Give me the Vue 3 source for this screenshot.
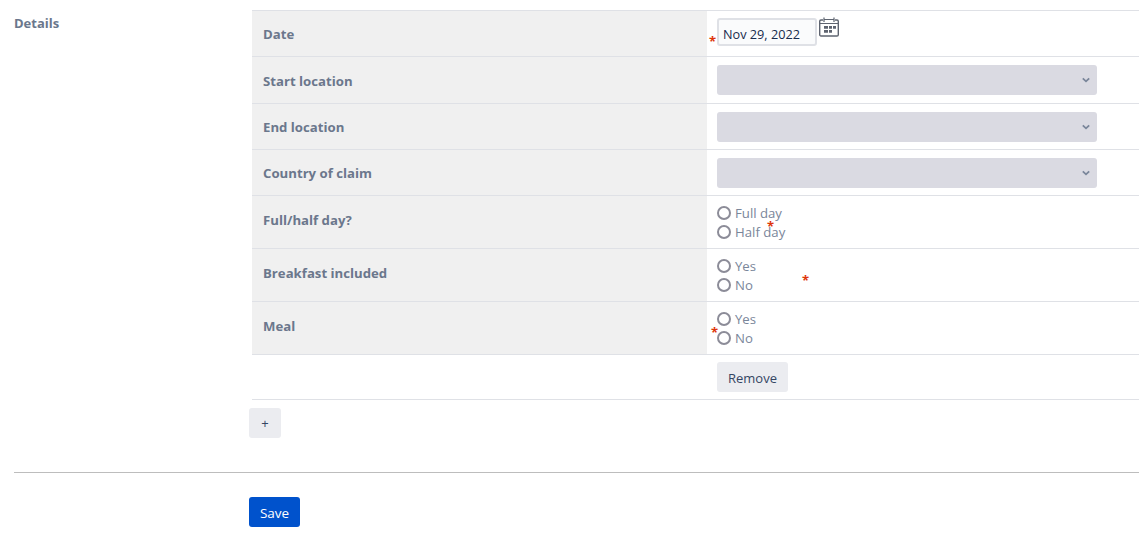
<script setup>
const rows = [
  { label: 'Date', type: 'date', height: 46, star: 'star-date' },
  { label: 'Start location', type: 'select', height: 47, labelClass: 'label-low' },
  { label: 'End location', type: 'select', height: 46 },
  { label: 'Country of claim', type: 'select', height: 46 },
  { label: 'Full/half day?', type: 'radio', height: 53, options: ['Full day', 'Half day'], star: 'star-day', labelClass: 'label-high' },
  { label: 'Breakfast included', type: 'radio', height: 53, options: ['Yes', 'No'], star: 'star-breakfast', labelClass: 'label-high' },
  { label: 'Meal', type: 'radio', height: 53, options: ['Yes', 'No'], star: 'star-meal', labelClass: 'label-high' }
]
</script>

<template>
  <div class="page">
    <div class="details">
      <div class="section-title">Details</div>
      <div class="content">
        <div class="table">
          <div
            v-for="row in rows"
            :key="row.label"
            class="row"
            :style="{ height: row.height + 'px' }"
          >
            <div class="label" :class="row.labelClass">{{ row.label }}</div>
            <div class="value">
              <span v-if="row.star" class="star" :class="row.star">*</span>

              <template v-if="row.type === 'date'">
                <div class="date-input">Nov 29, 2022</div>
                <svg class="calendar" width="21" height="21" viewBox="0 0 21 21" fill="none">
                  <path d="M4 3H2a1.300 1.300 0 0 0-1.300 1.300v13.400A1.300 1.300 0 0 0 2 19h16a1.300 1.300 0 0 0 1.300-1.300V4.300A1.300 1.300 0 0 0 18 3h-2" stroke="#5e6470" stroke-width="1.400" />
                  <path d="M5 .5v4.500M15 .5v4.500M5 2.500h10M.7 6.500h18.600" stroke="#5e6470" stroke-width="1.200" />
                  <path d="M5 9h4v2.700H5zM10 9h3v2.700h-3zM14 9h3v2.700h-3zM5 13h4v2.700H5zM10 13h3v2.700h-3z" fill="#5e6470" />
                </svg>
              </template>

              <div v-else-if="row.type === 'select'" class="select">
                <svg width="10" height="8" viewBox="0 0 10 8" fill="none">
                  <path d="M1.800 2.300l3.200 3L8.200 2.300" stroke="#7a869a" stroke-width="1.800" />
                </svg>
              </div>

              <div v-else class="radios">
                <label v-for="opt in row.options" :key="opt" class="radio">
                  <span class="circle"></span>{{ opt }}
                </label>
              </div>
            </div>
          </div>
          <div class="row row-actions">
            <div class="label-empty"></div>
            <div class="value">
              <button class="btn">Remove</button>
            </div>
          </div>
        </div>
        <button class="btn btn-add">+</button>
      </div>
    </div>

    <hr class="divider" />

    <div class="footer">
      <button class="btn-save">Save</button>
    </div>
  </div>
</template>

<style>
html, body {
  margin: 0;
  background: #fff;
}
</style>

<style scoped>
.page {
  width: 1147px;
  height: 550px;
  box-sizing: border-box;
  padding: 10px 8px 0 14px;
  font-family: "Open Sans", "Noto Sans", sans-serif;
  font-size: 13.2px;
  color: #172b4d;
  overflow: hidden;
}

.details {
  display: flex;
}

.section-title {
  width: 235px;
  flex: none;
  padding-top: 5px;
  font-size: 13px;
  font-weight: 700;
  line-height: 17px;
  color: #6b778c;
}

.content {
  flex: 1;
}

.table {
  margin-left: 3px;
  border-bottom: 1px solid #dfe1e6;
}

.row {
  display: flex;
  box-sizing: border-box;
  border-top: 1px solid #dfe1e6;
}

.row-actions {
  height: 45px;
}

.label {
  width: 455px;
  flex: none;
  display: flex;
  align-items: center;
  padding-left: 11px;
  box-sizing: border-box;
  background: #f0f0f0;
  font-weight: 700;
  color: #6b778c;
}

.label-low {
  padding-top: 2px;
}

.label-high {
  padding-bottom: 4px;
}

.label-empty {
  width: 455px;
  flex: none;
}

.value {
  position: relative;
  flex: 1;
  display: flex;
  align-items: center;
  padding-left: 10px;
}

.star {
  position: absolute;
  color: #de350b;
  font-size: 13px;
  font-weight: 700;
  line-height: 13px;
}

.star-date {
  left: 2px;
  top: 24px;
}

.star-day {
  left: 60px;
  top: 24px;
}

.star-breakfast {
  left: 95px;
  top: 25px;
}

.star-meal {
  left: 4px;
  top: 24px;
}

.date-input {
  width: 100px;
  height: 28px;
  margin-top: -3px;
  box-sizing: border-box;
  padding: 2px 0 0 4px;
  border: 2px solid #dfe1e6;
  border-radius: 3px;
  background: #fafbfc;
  font-size: 12.7px;
  line-height: 24px;
  white-space: nowrap;
}

.calendar {
  align-self: flex-start;
  margin: 6px 0 0 2px;
}

.select {
  width: 380px;
  height: 30px;
  display: flex;
  align-items: center;
  justify-content: flex-end;
  padding-right: 6px;
  box-sizing: border-box;
  border-radius: 3px;
  background: #dadae2;
}

.radios {
  display: flex;
  flex-direction: column;
}

.radio {
  display: flex;
  align-items: center;
  height: 19px;
  color: #7a869a;
}

.circle {
  width: 10px;
  height: 10px;
  margin-right: 4px;
  border: 2px solid #8c8c98;
  border-radius: 50%;
}

.btn {
  height: 30px;
  padding: 1px 11px 0;
  border: 0;
  border-radius: 3px;
  background: #ebecf0;
  color: #344563;
  font-family: inherit;
  font-size: 13px;
}

.btn-add {
  display: block;
  width: 32px;
  margin-top: 8px;
  padding: 0;
}

.divider {
  height: 1px;
  margin: 34px 0 0;
  border: 0;
  background: #bdbdbd;
}

.footer {
  padding: 24px 0 0 235px;
}

.btn-save {
  width: 51px;
  height: 30px;
  padding: 1px 0 0;
  border: 0;
  border-radius: 3px;
  background: #0052cc;
  color: #fff;
  font-family: inherit;
  font-size: 13.5px;
  font-weight: 500;
}
</style>
